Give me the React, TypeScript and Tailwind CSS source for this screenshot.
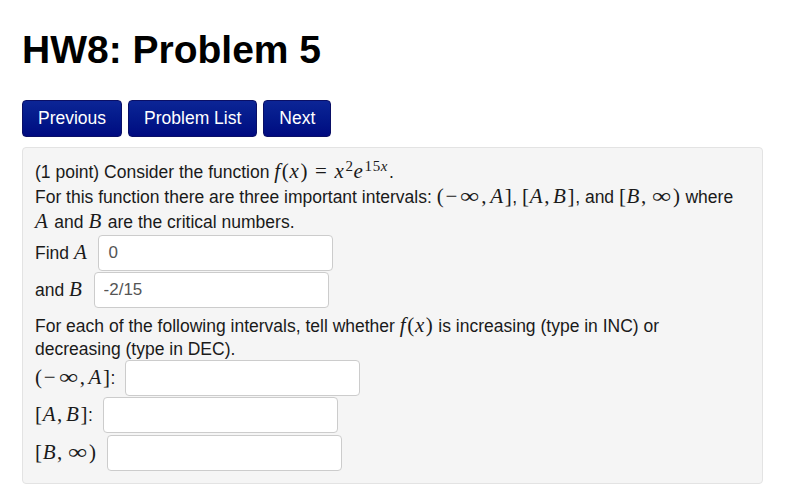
import React from "react";

// math bits, roughly in the look of MathJax output
const M = ({ children }: { children: React.ReactNode }) => (
  <span className="font-['Liberation_Serif',serif] text-[21px] leading-none tracking-[0.03em] whitespace-nowrap">
    {children}
  </span>
);
const I = ({ children }: { children: React.ReactNode }) => <i className="italic pr-[1px]">{children}</i>;
const Inf = () => (
  <span className="inline-block w-[23px] text-center tracking-normal">
    <span className="inline-block scale-x-[1.3]">∞</span>
  </span>
);
const Minus = () => <span className="inline-block w-[14px] text-center tracking-normal">−</span>;
const Comma = () => <span className="mr-[3px]">,</span>;

function Field({ value = "" }: { value?: string }) {
  return (
    <input
      type="text"
      defaultValue={value}
      className="w-[235px] h-[36px] rounded-[4px] border border-[#cccccc] bg-white px-[9px] text-[17px] text-[#555] outline-none"
    />
  );
}

function NavButton({ label }: { label: string }) {
  return (
    <button className="h-[37px] rounded-[4px] border border-[#0a0f66] bg-gradient-to-b from-[#0c2596] to-[#000a80] px-[15px] text-[17.5px] text-white">
      {label}
    </button>
  );
}

export default function App() {
  return (
    <div className="min-h-screen bg-white font-['Liberation_Sans',Arial,sans-serif] text-[#1a1a1a]">
      <div className="ml-[22px] w-[741px] pt-[28px]">
        <h1 className="text-[39px] font-bold leading-[44px] text-black">HW8: Problem 5</h1>

        <div className="mt-[28px] flex gap-[6px]">
          <NavButton label="Previous" />
          <NavButton label="Problem List" />
          <NavButton label="Next" />
        </div>

        <div className="mt-[10px] rounded-[4px] border border-[#e3e3e3] bg-[#f5f5f5] px-[12px] pb-[12px] pt-[12px] text-[17.5px]">
          <div className="leading-[25px]">
            (1 point) Consider the function{" "}
            <M>
              <I>f</I>(<I>x</I>)<span className="mx-[7px]">=</span>
              <I>x</I>
              <sup className="text-[15px]">2</sup>
              <I>e</I>
              <sup className="text-[15px]">
                15<I>x</I>
              </sup>
            </M>
            .
          </div>
          <div className="leading-[25px]">
            For this function there are three important intervals:{" "}
            <M>
              (<Minus />
              <Inf />
              <Comma />
              <I>A</I>]
            </M>
            ,{" "}
            <M>
              [<I>A</I>
              <Comma />
              <I>B</I>]
            </M>
            , and{" "}
            <M>
              [<I>B</I>
              <Comma />
              <Inf />)
            </M>{" "}
            where
          </div>
          <div className="leading-[25px]">
            <M>
              <I>A</I>
            </M>{" "}
            and{" "}
            <M>
              <I>B</I>
            </M>{" "}
            are the critical numbers.
          </div>

          <div className="flex items-center gap-[10px]">
            <span>
              Find{" "}
              <M>
                <I>A</I>
              </M>
            </span>
            <Field value="0" />
          </div>
          <div className="mt-[1px] flex items-center gap-[10px]">
            <span>
              and{" "}
              <M>
                <I>B</I>
              </M>
            </span>
            <Field value="-2/15" />
          </div>

          <div className="mt-[6px] leading-[24px]">
            For each of the following intervals, tell whether{" "}
            <M>
              <I>f</I>(<I>x</I>)
            </M>{" "}
            is increasing (type in INC) or
          </div>
          <div className="leading-[22px]">decreasing (type in DEC).</div>

          <div className="flex items-center gap-[10px]">
            <span>
              <M>
                (<Minus />
                <Inf />
                <Comma />
                <I>A</I>]
              </M>
              :
            </span>
            <Field />
          </div>
          <div className="mt-[1px] flex items-center gap-[10px]">
            <span>
              <M>
                [<I>A</I>
                <Comma />
                <I>B</I>]
              </M>
              :
            </span>
            <Field />
          </div>
          <div className="mt-[2px] flex items-center gap-[10px]">
            <span>
              <M>
                [<I>B</I>
                <Comma />
                <Inf />)
              </M>
            </span>
            <Field />
          </div>
        </div>
      </div>
    </div>
  );
}
